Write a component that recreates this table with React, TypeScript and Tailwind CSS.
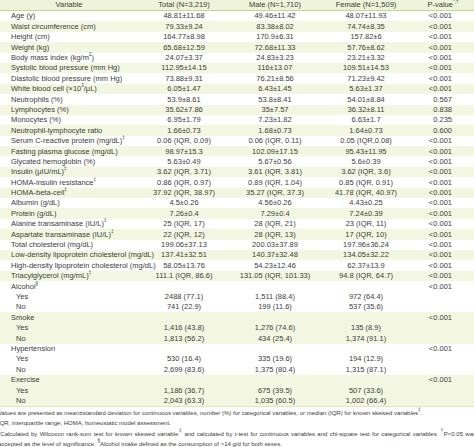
import React from "react";

type Row = {
  label: React.ReactNode;
  total: string;
  male: string;
  female: string;
  p: string;
  indent?: boolean;
  group: number;
};

const S = ({ children }: { children: React.ReactNode }) => (
  <sup className="text-[4.5px] top-[-0.9em]">{children}</sup>
);

const rows: Row[] = [];
const add = (
  label: React.ReactNode,
  total: string,
  male: string,
  female: string,
  p: string,
  group: number,
  indent = false
) => rows.push({ label, total, male, female, p, group, indent });

const cont: [React.ReactNode, string, string, string, string][] = [
  ["Age (y)", "48.81±11.68", "49.46±11.42", "48.07±11.93", "<0.001"],
  ["Waist circumference (cm)", "79.33±9.24", "83.38±8.02", "74.74±8.35", "<0.001"],
  ["Height (cm)", "164.77±8.98", "170.9±6.31", "157.82±6", "<0.001"],
  ["Weight (kg)", "65.68±12.59", "72.68±11.33", "57.76±8.62", "<0.001"],
  [<>Body mass index (kg/m<S>2</S>)</>, "24.07±3.37", "24.83±3.23", "23.21±3.32", "<0.001"],
  ["Systolic blood pressure (mm Hg)", "112.95±14.15", "116±13.07", "109.51±14.53", "<0.001"],
  ["Diastolic blood pressure (mm Hg)", "73.88±9.31", "76.21±8.56", "71.23±9.42", "<0.001"],
  [<>White blood cell (×10<S>3</S>/μL)</>, "6.05±1.47", "6.43±1.45", "5.63±1.37", "<0.001"],
  ["Neutrophils (%)", "53.9±8.61", "53.8±8.41", "54.01±8.84", "0.567"],
  ["Lymphocytes (%)", "35.62±7.86", "35±7.57", "36.32±8.11", "0.838"],
  ["Monocytes (%)", "6.95±1.79", "7.23±1.82", "6.63±1.7", "0.235"],
  ["Neutrophil-lymphocyte ratio", "1.66±0.73", "1.68±0.73", "1.64±0.73", "0.600"],
  [<>Serum C-reactive protein (mg/dL)<S>‡</S></>, "0.06 (IQR, 0.09)", "0.06 (IQR, 0.11)", "0.05 (IQR,0.08)", "<0.001"],
  ["Fasting plasma glucose (mg/dL)", "98.97±15.3", "102.09±17.15", "95.43±11.95", "<0.001"],
  ["Glycated hemoglobin (%)", "5.63±0.49", "5.67±0.56", "5.6±0.39", "<0.001"],
  [<>Insulin (μIU/mL)<S>‡</S></>, "3.62 (IQR, 3.71)", "3.61 (IQR, 3.81)", "3.62 (IQR, 3.6)", "<0.001"],
  [<>HOMA-insulin resistance<S>‡</S></>, "0.86 (IQR, 0.97)", "0.89 (IQR, 1.04)", "0.85 (IQR, 0.91)", "<0.001"],
  [<>HOMA-beta-cell<S>‡</S></>, "37.92 (IQR, 38.97)", "35.27 (IQR, 37.3)", "41.78 (IQR, 40.97)", "<0.001"],
  ["Albumin (g/dL)", "4.5±0.26", "4.56±0.26", "4.43±0.25", "<0.001"],
  ["Protein (g/dL)", "7.26±0.4", "7.29±0.4", "7.24±0.39", "<0.001"],
  [<>Alanine transaminase (IU/L)<S>‡</S></>, "25 (IQR, 17)", "28 (IQR, 21)", "23 (IQR, 11)", "<0.001"],
  [<>Aspartate transaminase (IU/L)<S>‡</S></>, "22 (IQR, 12)", "28 (IQR, 13)", "17 (IQR, 10)", "<0.001"],
  ["Total cholesterol (mg/dL)", "199.06±37.13", "200.03±37.89", "197.96±36.24", "<0.001"],
  ["Low-density lipoprotein cholesterol (mg/dL)", "137.41±32.51", "140.37±32.48", "134.05±32.22", "<0.001"],
  ["High-density lipoprotein cholesterol (mg/dL)", "58.05±13.76", "54.23±12.46", "62.37±13.9", "<0.001"],
  [<>Triacylglycerol (mg/mL)<S>‡</S></>, "111.1 (IQR, 86.6)", "131.05 (IQR, 101.33)", "94.8 (IQR, 64.7)", "<0.001"],
];
cont.forEach((c, i) => add(c[0], c[1], c[2], c[3], c[4], i));

const cats: [React.ReactNode, [string, string, string], [string, string, string]][] = [
  [<>Alcohol<S>§</S></>, ["2488 (77.1)", "1,511 (88.4)", "972 (64.4)"], ["741 (22.9)", "199 (11.6)", "537 (35.6)"]],
  ["Smoke", ["1,416 (43.8)", "1,276 (74.6)", "135 (8.9)"], ["1,813 (56.2)", "434 (25.4)", "1,374 (91.1)"]],
  ["Hypertension", ["530 (16.4)", "335 (19.6)", "194 (12.9)"], ["2,699 (83.6)", "1,375 (80.4)", "1,315 (87.1)"]],
  ["Exercise", ["1,186 (36.7)", "675 (39.5)", "507 (33.6)"], ["2,043 (63.3)", "1,035 (60.5)", "1,002 (66.4)"]],
];
cats.forEach((c, i) => {
  const g = cont.length + i;
  add(c[0], "", "", "", "<0.001", g);
  add("Yes", c[1][0], c[1][1], c[1][2], "", g, true);
  add("No", c[2][0], c[2][1], c[2][2], "", g, true);
});

export default function App() {
  return (
    <div className="w-[474px] h-[447px] overflow-hidden bg-white text-[#3c3c3c] font-['Liberation_Sans_Narrow','Arial_Narrow',sans-serif] text-[7.5px] leading-none">
      <div className="grid grid-cols-[138px_92px_90px_92px_62px] h-[11px] items-center bg-[#eef3d9] border-b-[1.5px] border-[#c6d88c]">
        <div className="text-center">Variable</div>
        <div className="text-center">Total (N=3,219)</div>
        <div className="text-center">Male (N=1,710)</div>
        <div className="text-center">Female (N=1,509)</div>
        <div className="text-center">
          P-value<S>*,†</S>
        </div>
      </div>
      <div className="border-b border-[#dfe8bd]">
        {rows.map((r, i) => (
          <div
            key={i}
            className={
              "grid grid-cols-[138px_92px_90px_92px_62px] h-[10.4px] items-center " +
              (r.group % 2 === 1 ? "bg-[#f3f7e1]" : "bg-white")
            }
          >
            <div className={"whitespace-nowrap " + (r.indent ? "pl-[16px]" : "pl-[11px]")}>{r.label}</div>
            <div className="text-center whitespace-nowrap">{r.total}</div>
            <div className="text-center whitespace-nowrap">{r.male}</div>
            <div className="text-center whitespace-nowrap">{r.female}</div>
            <div className="text-right pr-[22px] whitespace-nowrap">{r.p}</div>
          </div>
        ))}
      </div>
      <div className="ml-[-2px] w-[478px] pt-[1px] text-[6px] leading-[10.5px] whitespace-nowrap">
        <div>
          Values are presented as mean±standard deviation for continuous variables, number (%) for categorical variables, or median (IQR) for known skewed variables<S>‡</S>.
        </div>
        <div>IQR, interquartile range; HOMA, homeostatic model assessment.</div>
        <div className="[text-align-last:justify]">
          *Calculated by Wilcoxon rank-sum test for known skewed variable<S>‡</S> and calculated by t-test for continuous variables and chi-square test for categorical variables. <S>†</S>P&lt;0.05 was
        </div>
        <div>
          accepted as the level of significance. <S>§</S>Alcohol intake defined as the consumption of &gt;14 g/d for both sexes.
        </div>
      </div>
    </div>
  );
}
